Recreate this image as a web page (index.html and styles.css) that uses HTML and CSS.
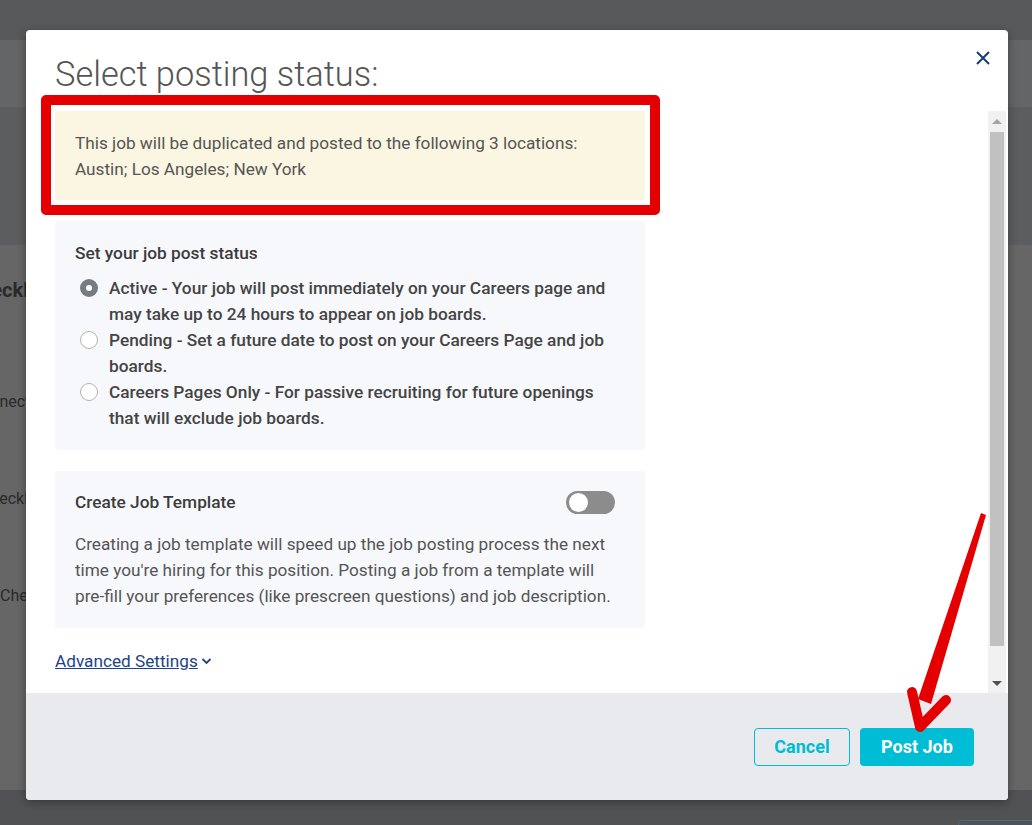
FILE: index.html
```html
<!DOCTYPE html>
<html lang="en">
<head>
  <meta charset="UTF-8" />
  <title>Select posting status</title>
  <link rel="stylesheet" href="styles.css">
</head>
<body>
  <div class="page">
    <div class="band-top"></div>
    <div class="band-nav"></div>
    <div class="band-sub"></div>
    <div class="band-main">
      <div class="row row-title">Checklists</div>
      <div class="row row-two">Connect</div>
      <div class="row row-three">Checklist</div>
      <div class="row row-four">Checklist</div>
    </div>
    <div class="band-bottom"><span class="ghost-btn"></span></div>
  </div>

  <div class="modal">
    <button class="close" aria-label="Close">
      <svg width="14" height="14" viewBox="0 0 14 14"><path d="M1 1 L13 13 M13 1 L1 13" stroke="#1b3a6e" stroke-width="2" fill="none"/></svg>
    </button>

    <div class="modal-head">
      <h1>Select posting status:</h1>
    </div>

    <div class="modal-scroll">
      <div class="scroll-content">
        <div class="notice">
          This job will be duplicated and posted to the following 3 locations:<br>
          Austin; Los Angeles; New York
        </div>

        <div class="panel">
          <div class="panel-title">Set your job post status</div>
          <div class="options">
            <label class="option"><span class="radio checked"></span><span>Active - Your job will post immediately on your Careers page and may take up to 24 hours to appear on job boards.</span></label>
            <label class="option"><span class="radio"></span><span>Pending - Set a future date to post on your Careers Page and job boards.</span></label>
            <label class="option"><span class="radio"></span><span>Careers Pages Only - For passive recruiting for future openings that will exclude job boards.</span></label>
          </div>
        </div>

        <div class="panel panel-template">
          <div class="panel-row">
            <div class="panel-title">Create Job Template</div>
            <span class="toggle"><span class="knob"></span></span>
          </div>
          <p class="panel-text">Creating a job template will speed up the job posting process the next time you're hiring for this position. Posting a job from a template will pre-fill your preferences (like prescreen questions) and job description.</p>
        </div>

        <a class="advanced" href="#">Advanced Settings<svg width="11" height="8" viewBox="0 0 11 8"><path d="M1.5 2 L5.5 6 L9.5 2" stroke="#1d4488" stroke-width="1.8" fill="none"/></svg></a>
      </div>

      <div class="scrollbar">
        <div class="sb-btn"><span class="tri-up"></span></div>
        <div class="sb-track"><div class="sb-thumb"></div></div>
        <div class="sb-btn"><span class="tri-down"></span></div>
      </div>
    </div>

    <div class="modal-foot">
      <button class="btn btn-outline">Cancel</button>
      <button class="btn btn-primary">Post Job</button>
    </div>
  </div>

  <!-- screenshot annotations -->
  <div class="mark-box"></div>
  <svg class="mark-arrow" width="1032" height="825" viewBox="0 0 1032 825">
    <polygon points="981,513 986,515 931,704 918,699" fill="#e40000"/>
    <polyline points="912,692 920,727 946,700" fill="none" stroke="#e40000" stroke-width="10" stroke-linecap="round" stroke-linejoin="round"/>
  </svg>
</body>
</html>
```

FILE: styles.css
```css
* {
  box-sizing: border-box;
}

body {
  margin: 0;
  width: 1032px;
  height: 825px;
  overflow: hidden;
  position: relative;
  font-family: Roboto, 'Liberation Sans', sans-serif;
  background-color: #58595b;
}

/* dimmed page behind the dialog */
.page {
  display: flex;
  flex-direction: column;
  height: 825px;
}

.band-top {
  height: 40px;
  background-color: #58595b;
}

.band-nav {
  height: 67px;
  background-color: #646566;
}

.band-sub {
  height: 138px;
  background-color: #5c5d5e;
}

.band-main {
  height: 545px;
  background-color: #666666;
  color: #2a2a2a;
  font-size: 16px;
  padding-top: 32px;
}

.row {
  white-space: nowrap;
  line-height: 26px;
}

.row-title {
  font-size: 20px;
  font-weight: 700;
  margin-left: -33px;
}

.row-two {
  margin-top: 86px;
  margin-left: -29px;
}

.row-three {
  margin-top: 71px;
  margin-left: -20px;
}

.row-four {
  margin-top: 71px;
}

.band-bottom {
  flex: 1;
  background-color: #515253;
  position: relative;
}

.ghost-btn {
  position: absolute;
  left: 958px;
  top: 30px;
  width: 80px;
  height: 20px;
  border: 1px solid #3c6f7a;
  border-radius: 3px;
}

/* dialog */
.modal {
  position: absolute;
  left: 26px;
  top: 30px;
  width: 982px;
  height: 770px;
  background: #fff;
  border-radius: 4px;
  box-shadow: 0 2px 10px rgba(0, 0, 0, 0.35);
  display: flex;
  flex-direction: column;
  overflow: hidden;
}

.close {
  position: absolute;
  right: 18px;
  top: 21px;
  background: none;
  border: none;
  padding: 0;
  width: 14px;
  height: 14px;
  cursor: pointer;
}

.close svg {
  display: block;
}

.modal-head {
  height: 81px;
  padding: 24px 0 0 29px;
}

.modal-head h1 {
  margin: 0;
  font-size: 34.4px;
  font-weight: 300;
  line-height: 40px;
  color: #555;
}

.modal-scroll {
  flex: 1;
  display: flex;
  min-height: 0;
}

.scroll-content {
  flex: 1;
  padding-left: 29px;
  overflow: hidden;
}

.notice {
  width: 590px;
  background-color: #faf6e1;
  border-radius: 3px;
  padding: 19px 20px 18px;
  color: #555;
  font-size: 17.2px;
  line-height: 26px;
}

.panel {
  width: 590px;
  margin-top: 21px;
  background-color: #f7f8fc;
  border-radius: 3px;
  padding: 19px 20px 19px;
}

.panel-title {
  font-size: 17.3px;
  font-weight: 500;
  line-height: 26px;
  color: #3c3c3c;
}

.options {
  margin-top: 9px;
}

.option {
  display: flex;
  gap: 11px;
  padding-left: 5px;
  font-size: 17.3px;
  font-weight: 500;
  line-height: 26px;
  color: #444;
}

.radio {
  flex: none;
  width: 18px;
  height: 18px;
  margin-top: 4px;
  border-radius: 50%;
  border: 1.5px solid #b3b3b3;
  background: #fff;
  position: relative;
}

.radio.checked {
  border: none;
  background-color: #767b84;
}

.radio.checked::after {
  content: "";
  position: absolute;
  left: 6px;
  top: 6px;
  width: 6px;
  height: 6px;
  border-radius: 50%;
  background: #fff;
}

.panel-template {
  padding: 18px 30px 19px 20px;
}

.panel-row {
  display: flex;
  justify-content: space-between;
  align-items: center;
}

.toggle {
  width: 49px;
  height: 23px;
  border-radius: 12px;
  background-color: #8c8c8c;
  position: relative;
}

.knob {
  position: absolute;
  left: 3px;
  top: 2px;
  width: 19px;
  height: 19px;
  border-radius: 50%;
  background: #fff;
}

.panel-text {
  margin: 16px 0 0;
  font-size: 17.2px;
  line-height: 26px;
  color: #555;
}

.advanced {
  display: inline-flex;
  align-items: center;
  gap: 3px;
  margin-top: 20px;
  font-size: 17.2px;
  line-height: 26px;
  color: #1d4488;
  text-decoration: underline;
}

/* fake scrollbar */
.scrollbar {
  width: 18px;
  margin-right: 2px;
  background-color: #f1f1f1;
  display: flex;
  flex-direction: column;
}

.sb-btn {
  height: 20px;
  display: flex;
  align-items: center;
  justify-content: center;
}

.tri-up {
  width: 0;
  height: 0;
  border-left: 5px solid transparent;
  border-right: 5px solid transparent;
  border-bottom: 5px solid #a3a3a3;
}

.tri-down {
  width: 0;
  height: 0;
  border-left: 5px solid transparent;
  border-right: 5px solid transparent;
  border-top: 5px solid #505050;
}

.sb-track {
  flex: 1;
  padding: 1px 2px;
}

.sb-thumb {
  height: 514px;
  background-color: #c1c1c1;
}

.modal-foot {
  height: 107px;
  background-color: #e9eaee;
  display: flex;
  justify-content: flex-end;
  align-items: center;
  gap: 10px;
  padding-right: 34px;
}

.btn {
  height: 38px;
  border-radius: 4px;
  font-family: Roboto, 'Liberation Sans', sans-serif;
  font-size: 18px;
  font-weight: 700;
  cursor: pointer;
}

.btn-outline {
  width: 96px;
  background: transparent;
  border: 1px solid #00bcd4;
  color: #00bcd4;
}

.btn-primary {
  width: 114px;
  background-color: #00bdd6;
  border: none;
  color: #fff;
}

/* red annotations on top of the screenshot */
.mark-box {
  position: absolute;
  left: 41px;
  top: 95px;
  width: 619px;
  height: 120px;
  border: 10px solid #e40000;
  border-radius: 5px;
}

.mark-arrow {
  position: absolute;
  left: 0;
  top: 0;
  pointer-events: none;
}
```
